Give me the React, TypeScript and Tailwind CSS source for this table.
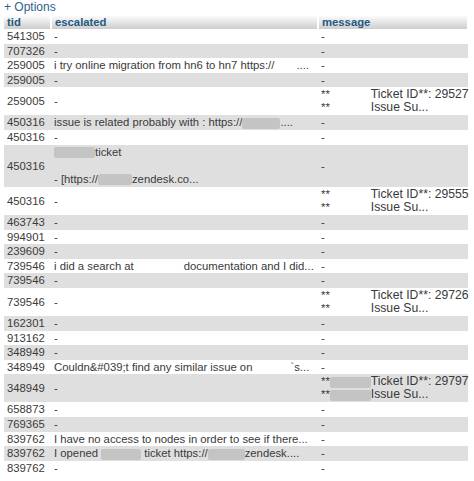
import type { ReactNode } from "react"

type Row = {
  tid: string
  escalated?: ReactNode
  message?: ReactNode
}

function Blur({ w, light }: { w: number; light?: boolean }) {
  return (
    <span
      className={light ? "inline-block h-[11px] align-middle" : "inline-block h-[11px] align-middle rounded-[2px] bg-[#c4c4c4] blur-[0.6px]"}
      style={{ width: w }}
    />
  )
}

function Ticket({ id, boxed }: { id: string; boxed?: boolean }) {
  return (
    <div className="whitespace-nowrap leading-[13px]">
      <div>
        **{boxed ? <Blur w={41} /> : <Blur w={41} light />}
        <span className="text-[12.2px]">Ticket ID**: {id}</span>
      </div>
      <div>
        **{boxed ? <Blur w={41} /> : <Blur w={41} light />}
        <span className="text-[12.2px]">Issue Su...</span>
      </div>
    </div>
  )
}

const rows: Row[] = [
  { tid: "541305" },
  { tid: "707326" },
  {
    tid: "259005",
    escalated: (
      <>
        i try online migration from hn6 to hn7 https://<Blur w={22} light />....
      </>
    ),
  },
  { tid: "259005" },
  { tid: "259005", message: <Ticket id="29527" /> },
  {
    tid: "450316",
    escalated: (
      <>
        issue is related probably with : https://<Blur w={38} />....
      </>
    ),
  },
  { tid: "450316" },
  {
    tid: "450316",
    escalated: (
      <div className="whitespace-nowrap leading-[13.5px]">
        <div>
          <Blur w={41} />ticket
        </div>
        <div>&nbsp;</div>
        <div>
          - [https://<Blur w={34} />zendesk.co...
        </div>
      </div>
    ),
  },
  { tid: "450316", message: <Ticket id="29555" /> },
  { tid: "463743" },
  { tid: "994901" },
  { tid: "239609" },
  {
    tid: "739546",
    escalated: (
      <>
        i did a search at<Blur w={50} light />documentation and I did...
      </>
    ),
  },
  { tid: "739546" },
  { tid: "739546", message: <Ticket id="29726" /> },
  { tid: "162301" },
  { tid: "913162" },
  { tid: "348949" },
  {
    tid: "348949",
    escalated: (
      <>
        Couldn&amp;#039;t find any similar issue on<Blur w={38} light />`s...
      </>
    ),
  },
  { tid: "348949", message: <Ticket id="29797" boxed /> },
  { tid: "658873" },
  { tid: "769365" },
  { tid: "839762", escalated: "I have no access to nodes in order to see if there..." },
  {
    tid: "839762",
    escalated: (
      <>
        I opened <Blur w={40} /> ticket https://<Blur w={37} />zendesk....
      </>
    ),
  },
  { tid: "839762" },
]

export default function App() {
  return (
    <div className="min-h-[481px] w-[474px] bg-white font-['Liberation_Sans',Arial,sans-serif] text-[11.3px] leading-[12.6px] text-[#3a3a3a]">
      <div className="h-[15px] pl-[4px] pt-[1px] text-[12px] leading-[13px] text-[#2f5f8f]">+ Options</div>
      <table className="ml-[4px] w-[464px] table-fixed border-collapse">
        <colgroup>
          <col className="w-[47px]" />
          <col className="w-[267px]" />
          <col className="w-[150px]" />
        </colgroup>
        <thead>
          <tr>
            {["tid", "escalated", "message"].map((h) => (
              <th
                key={h}
                className="h-[14px] border-r-2 border-white bg-gradient-to-b from-white to-[#cdcdcd] px-[3px] text-left font-bold text-[#235a81]"
              >
                {h}
              </th>
            ))}
          </tr>
        </thead>
        <tbody>
          {rows.map((row, i) => (
            <tr key={i} className={i % 2 === 1 ? "bg-[#dfdfdf]" : "bg-white"}>
              <td className="px-[3px] py-px align-middle">{row.tid}</td>
              <td className="overflow-hidden whitespace-nowrap px-[3px] py-px align-middle">
                {row.escalated ?? "-"}
              </td>
              <td className="overflow-visible whitespace-nowrap px-[3px] py-px align-middle">
                {row.message ?? "-"}
              </td>
            </tr>
          ))}
        </tbody>
      </table>
    </div>
  )
}
